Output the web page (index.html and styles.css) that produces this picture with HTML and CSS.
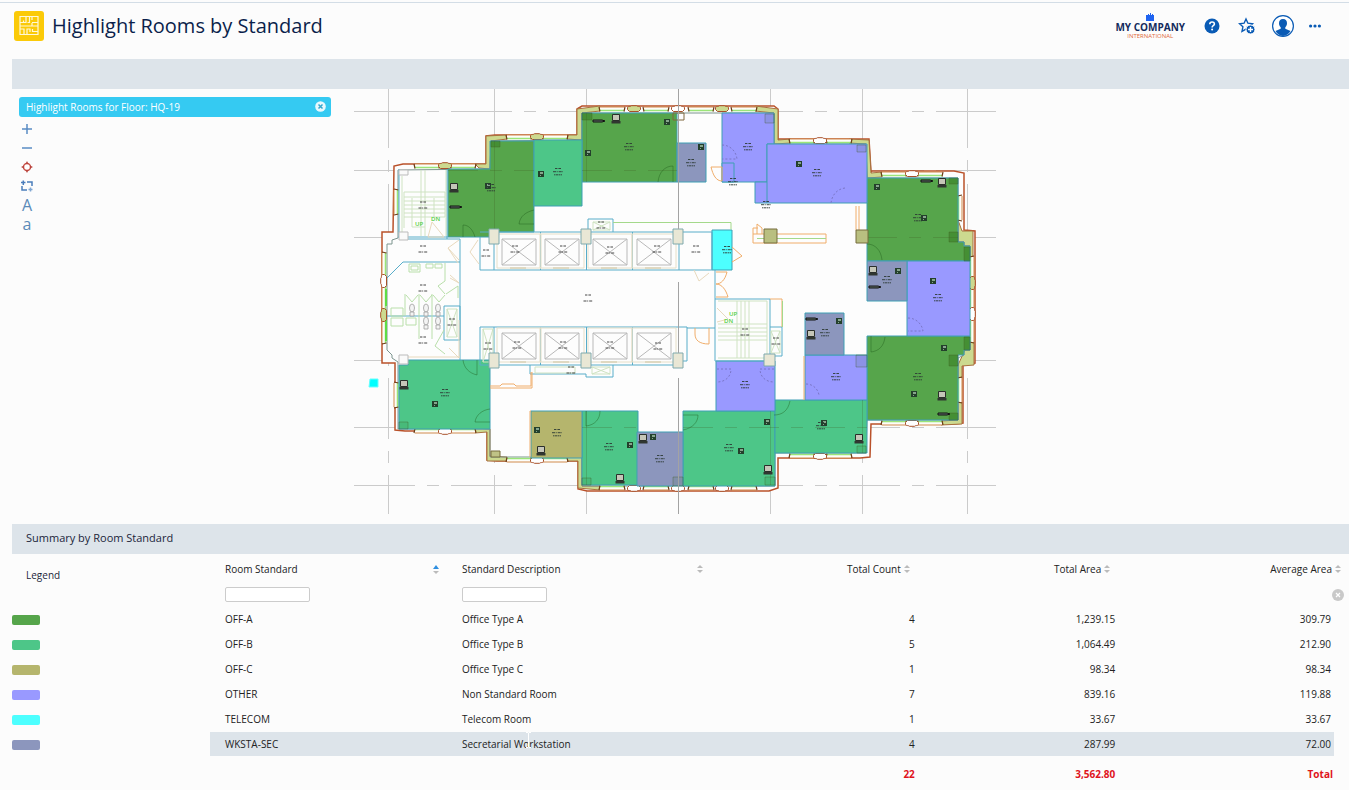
FILE: index.html
```html
<!DOCTYPE html>
<html lang="en">

	<head>
		<meta charset="UTF-8">
		<title>Highlight Rooms by Standard</title>
		<link rel="stylesheet" href="styles.css">
	</head>

	<body>
		<header class="top">
			<svg class="app-icon" viewBox="0 0 30 30">
				<rect width="30" height="30" rx="3" fill="#fbca08"/>
				<path d="M6 5.500h18v18H6zM6 11.500h3.500v-2M12 5.500v6h-2M15.500 5.500v6h-2M18 5.500v3.500M18 11.500h6M18 15h6M6 15h12v-3M6 18h4v5.500M13 23.500v-5.500h3v3M18.500 18v2.500h5.500" fill="none" stroke="#fff8d8" stroke-width="1.200"/>
			</svg>
			<h1>Highlight Rooms by Standard</h1>
			<div class="logo">
				<svg width="10" height="9" viewBox="0 0 10 9"><path d="M1 2h2V1h1v1h1V0h1v2h1V1h1v1h1v6H1z" fill="#1f63f0"/></svg>
				<b>MY COMPANY</b>
				<span>INTERNATIONAL</span>
			</div>
			<nav class="tools">
				<button type="button" class="help" aria-label="Help">
					<svg width="16" height="16" viewBox="0 0 16 16"><circle cx="8" cy="8" r="7.5" fill="#0a5bb5"/><path d="M5.8 6.2c0-3 4.6-2.9 4.6-.2 0 1.7-2.3 1.7-2.3 3.4" fill="none" stroke="#fff" stroke-width="1.6"/><circle cx="8.1" cy="11.6" r="1" fill="#fff"/></svg>
				</button>
				<button type="button" class="fav" aria-label="Add to favorites">
					<svg width="18" height="18" viewBox="0 0 18 18"><path d="M8 2l1.9 4.2 4.6.5-3.4 3.1.9 4.5L8 12.1l-4 2.2.9-4.5L1.5 6.7l4.6-.5z" fill="none" stroke="#0a5bb5" stroke-width="1.4"/><circle cx="12.5" cy="12.5" r="4.5" fill="#0a5bb5" stroke="#fcfcfc"/><path d="M12.5 10v5M10 12.5h5" stroke="#fff" stroke-width="1.4"/></svg>
				</button>
				<button type="button" class="user" aria-label="My profile">
					<svg width="22" height="22" viewBox="0 0 22 22"><circle cx="11" cy="11" r="10.4" fill="#fff" stroke="#0a5bb5" stroke-width="1.2"/><path d="M11 4c2.8 0 4 1.9 4 4.3 0 1.7-.7 3-1.7 4v1.4l5.2 2.3c-1.6 3-4.3 4.900-7.500 4.900S5.100 19 3.500 16l5.200-2.300v-1.400c-1-1-1.700-2.300-1.700-4C7 5.900 8.200 4 11 4z" fill="#0a5bb5"/></svg>
				</button>
				<button type="button" class="more" aria-label="More">
					<svg width="12" height="4" viewBox="0 0 12 4"><g fill="#0a5bb5"><circle cx="1.6" cy="2" r="1.6"/><circle cx="6" cy="2" r="1.6"/><circle cx="10.4" cy="2" r="1.6"/></g></svg>
				</button>
			</nav>
		</header>

		<main>
			<div class="bar"></div>

			<!-- floor drawing -->
			<section class="drawing">
				<div class="side">
					<div class="pill">
						<span>Highlight Rooms for Floor: HQ-19</span>
						<button type="button" aria-label="Close">
							<svg width="11" height="11" viewBox="0 0 11 11"><circle cx="5.5" cy="5.5" r="5.3" fill="#e8f8fd"/><path d="M3.5 3.5l4 4M7.5 3.5l-4 4" stroke="#35a6cc" stroke-width="1.5"/></svg>
						</button>
					</div>
					<div class="zoom">
						<button type="button" aria-label="Zoom in"><svg viewBox="0 0 12 12"><path d="M6 1v10M1 6h10" stroke="#5a8cc4" stroke-width="1.5"/></svg></button>
						<button type="button" aria-label="Zoom out"><svg viewBox="0 0 12 12"><path d="M1 6h10" stroke="#5a8cc4" stroke-width="1.5"/></svg></button>
						<button type="button" aria-label="Reset view"><svg viewBox="0 0 12 12"><circle cx="6" cy="6" r="3.5" fill="#fff" stroke="#c9534b" stroke-width="1.5"/><path d="M6 0l1.500 3h-3zM6 12l1.500-3h-3zM0 6l3-1.500v3zM12 6l-3-1.500v3z" fill="#b8433c"/></svg></button>
						<button type="button" aria-label="Zoom window"><svg viewBox="0 0 12 12"><path d="M0 2.500h4.500M2.300 .5v4.500M6 2h5v4M1 6v4h5" fill="none" stroke="#4a7dbb" stroke-width="1.5"/><path d="M7.500 9.500h4M9.500 7.500v4" stroke="#7fa6d2" stroke-width="1.5"/></svg></button>
						<button type="button" aria-label="Larger text">A</button>
						<button type="button" aria-label="Smaller text">a</button>
					</div>
				</div>

				<svg class="plan" viewBox="350 89 650 425" role="img" aria-label="Floor plan HQ-19">
					<defs>
						<g id="win"><path d="M0 0h24v4H0z" fill="#fdfdfa"/><path d="M0 3.500h24" stroke="#9be578" stroke-width="1.5"/><path d="M0 0h24" stroke="#d08a4c"/><path d="M-1 0l1 4.500M25 0l-1 4.500" stroke="#6d3d16" stroke-width="1.2"/></g>
						<path id="bulge" d="M-6.500 .5c0-1 2-1 3-1.200l1-.6h5l1 .6c1 .2 3 .2 3 1.200v2l-2 2h-9l-2-2z" stroke="#a8512a"/>
						<g id="phone"><path d="M-3-3h6v6h-6z" fill="#24402c"/><path d="M-1-2h3v2h-3zM-1 1h1v1h-1z" fill="#86a58c"/></g>
						<g id="pc"><path d="M-3.500-4.500h7v6h-7z" fill="#c5c6b8" stroke="#2b2f2b"/><path d="M-4.500 2h9v2.500h-9z" fill="#303630"/></g>
						<path id="bar" d="M-6-1H3l3 1-3 1h-9z" fill="#607068" stroke="#111"/>
						<g id="tag" fill="none" stroke="#2c3a34" stroke-width=".9"><path d="M-3-3.500h6" stroke-dasharray="2 .6 1 .4"/><path d="M-5-.3H5" stroke-dasharray="3 .7 1 1"/><path d="M-4 2.800h8" stroke-dasharray="1 .5 3 .5"/></g>
						<g id="tag2" fill="none" stroke="#333" stroke-width=".9"><path d="M-3-3h6" stroke-dasharray="2 .6 1 .4"/><path d="M-4.500 3h9" stroke-dasharray="3 .7 1 1"/></g>
						<g id="lift"><path d="M0 0h34v26H0zM0 0l34 26M34 0L0 26" fill="none" stroke="#b9b9b9"/><path d="M-5-5H39V29H-5z" fill="none" stroke="#e6dfc8"/><path d="M8 29h16" stroke="#cfc4a0"/></g>
						<path id="col" d="M0 0h10v15H0z" fill="#e9e7d5" stroke="#7fa9ad"/>
						<g id="wc" fill="#f4f4f4" stroke="#a0a0a0" stroke-width=".8"><ellipse cy="2" rx="2.500" ry="4"/><path d="M-2 6h4v4h-4z"/></g>
					</defs>

					<!-- grid -->
					<g stroke="#cbcbcb" stroke-dasharray="61 12 12 12">
						<path d="M354 111.500h642M354 170.500h642M354 237.500h642M354 360.500h642M354 427.500h642M354 485.500h642"/>
						<path d="M388.500 87v427M494.500 87v427M586.500 87v427M770.500 87v427M862.500 87v427M967.500 87v427"/>
					</g>

					<!-- walls -->
					<path class="outer" d="M382 255v-23h11l1-66 9-2h83v-28l9-1h82v-26l5-3h192l4 3v31l1-1h90l2 33 1-1h82l10 2v57l11 1v132l-12 2v58l-9 1h-83l-1 33-10 1h-82v30l-9 3H587l-9-2v-27l-1-1h-80l-10-1v-28l-1-1h-81l-10-1v-67h-13z"/>
					<g class="khaki">
						<path d="M475 164h11v-28l21-1v4l-16 2-1 28-11-1z"/>
						<path d="M567 135h10v-26l23-3v5l-18 2v27l-15-1z"/>
						<path d="M755 106l23 3v31l13-1v4l-17 1v-31l-19-2z"/>
						<path d="M849 139l20 1 2 33 11-1v5l-15 1-1-34-17-1z"/>
						<path d="M958 220l4 11h11v26h-3v-11h-6v-4h-6z"/>
						<path d="M970 341h4v24l-12 1v12h-4v-13l7-15h5z"/>
						<path d="M962 402v22l-21 1v-4l17-1v-18z"/>
						<path d="M475 428l15 1v27l17 1v4h-20v-29l-12 1z"/>
						<path d="M567 457h15v29h18v4l-22-2v-27h-11z"/>
					</g>
					<path class="inner" d="M398 170l92-1 1-28 91-1v-27h192v31h92l1 34h91v64h6v4h6v104h-6v5l-6 3v62h-91l-1 33h-91v33H582v-29h-92v-28h-92v-67l-6-4v-3l-5-5V244h5v-4l6-2z"/>

					<g>
						<use href="#win" x="415" y="164"/><use href="#win" x="451" y="164"/><use href="#win" x="507" y="135"/><use href="#win" x="543" y="135"/>
						<use href="#win" x="600" y="107"/><use href="#win" x="644" y="107"/><use href="#win" x="689" y="107"/><use href="#win" x="732" y="107"/>
						<use href="#win" x="790" y="139"/><use href="#win" x="827" y="139"/><use href="#win" x="882" y="172"/><use href="#win" x="918" y="172"/>
						<g transform="scale(1 -1)">
							<use href="#win" x="415" y="-433"/><use href="#win" x="451" y="-433"/><use href="#win" x="507" y="-462"/><use href="#win" x="543" y="-462"/>
							<use href="#win" x="600" y="-490"/><use href="#win" x="644" y="-490"/><use href="#win" x="689" y="-490"/><use href="#win" x="732" y="-490"/>
							<use href="#win" x="790" y="-458"/><use href="#win" x="827" y="-458"/><use href="#win" x="882" y="-425"/><use href="#win" x="918" y="-425"/>
						</g>
						<use href="#win" transform="translate(394 214) rotate(-90)"/><use href="#win" transform="translate(394 407) rotate(-90)"/>
						<use href="#win" transform="translate(382 277) rotate(-90)"/><use href="#win" transform="translate(382 310) rotate(-90)"/><use href="#win" transform="translate(382 343) rotate(-90)"/>
						<use href="#win" transform="translate(962 196) rotate(90)"/><use href="#win" transform="translate(962 378) rotate(90)"/>
						<use href="#win" transform="translate(974 257) rotate(90)"/><use href="#win" transform="translate(974 287) rotate(90)"/><use href="#win" transform="translate(974 318) rotate(90)"/>
					</g>
					<path d="M386 289v17M386 319v22" stroke="#5fdc45" stroke-width="2"/>
					<g fill="#ccd98f">
						<use href="#bulge" x="445" y="164"/><use href="#bulge" x="537" y="135"/><use href="#bulge" x="634" y="107"/><use href="#bulge" x="722" y="107"/>
						<use href="#bulge" transform="translate(382 315) rotate(-90)"/><use href="#bulge" transform="translate(974 283) rotate(90)"/>
					</g>
					<g fill="#fff">
						<use href="#bulge" x="678" y="107"/><use href="#bulge" x="820" y="139"/><use href="#bulge" x="912" y="172"/>
						<use href="#bulge" transform="translate(382 281) rotate(-90)"/><use href="#bulge" transform="translate(974 314) rotate(90)"/>
						<g transform="scale(1 -1)">
							<use href="#bulge" x="445" y="-433"/><use href="#bulge" x="537" y="-462"/><use href="#bulge" x="634" y="-490"/><use href="#bulge" x="678" y="-490"/>
							<use href="#bulge" x="722" y="-490"/><use href="#bulge" x="820" y="-458"/><use href="#bulge" x="912" y="-425"/>
						</g>
					</g>

					<!-- rooms -->
					<g class="room">
						<g class="off-a">
							<path d="M448 169h42v-28h44v91h-40v5h-46z"/>
							<path d="M582 113h95v69h-95z"/>
							<path d="M867 178h91v64h6v4h6v15H867z"/>
							<path d="M867 336h103v14h-6v5h-6v65h-91z"/>
						</g>
						<g class="off-b">
							<path d="M534 140h48v66h-48z"/>
							<path d="M408 360h82v69h-91v-64h9z"/>
							<path d="M582 411h56v74h-56z"/>
							<path d="M683 411h92v75h-92z"/>
							<path d="M775 400h92v53h-92z"/>
						</g>
						<path class="off-c" d="M531 411h51v47h-51z"/>
						<g class="other">
							<path d="M722 113h52v31h-7v38h-45z"/>
							<path d="M722 163h12v19h-12z"/>
							<path d="M767 144h100v59H755v-21h12z"/>
							<path d="M767 182v21"/>
							<path d="M907 261h63v75h-63z"/>
							<path d="M805 355h62v45h-62z"/>
							<path d="M716 361h59v50h-59z"/>
						</g>
						<path class="telecom" d="M712 230h20v40h-20z"/>
						<g class="wksta">
							<path d="M677 143h29v39h-29z"/>
							<path d="M867 261h40v40h-40z"/>
							<path d="M805 313h39v42h-39z"/>
							<path d="M637 432h46v54h-46z"/>
						</g>
					</g>
					<!-- columns and grid showing through the room colours -->
					<g fill="#1d5c00" fill-opacity=".3" stroke="#3f5a20" stroke-opacity=".35">
						<path d="M491 141h9v6h-9zM582 113h10v7h-10zM949 178h9v6h-9zM949 232h9v10h-9zM949 355h9v11h-9zM949 413h9v7h-9zM964 247h6v14h-6zM964 337h6v13h-6z"/>
						<path d="M857 145h9v7h-9zM856 355h11v12h-11zM765 114h9v9h-9zM673 477h10v9h-10zM582 478h9v7h-9zM765 477h10v8h-10zM857 446h9v7h-9zM399 422h9v7h-9z" fill-opacity=".1"/>
					</g>
					<g stroke="#3f5a20" stroke-opacity=".25">
						<path d="M582 170.500h95M448 170.500h86M867 237.500h91M582 427.500h55M683 427.500h184" stroke-dasharray="30 12 12 12"/>
						<path d="M494.500 141v91M586.500 113v69M586.500 411v74M770.500 411v74M862.500 400v53"/>
					</g>

					<!-- core -->
					<g class="core">
						<path d="M448 237h-50M407 239h53v121M387 278l16-16h57M387 316h57M444 306h16v34h-16z"/>
						<path d="M480 237v33h232v-38H480M494 232v38M540.500 232v38M586.500 232v38M632.500 232v38M679 232v38"/>
						<path d="M480 365v-38h207v34h-5v4H480M494 327v38M540.500 327v38M586.500 327v38M632.500 327v38"/>
						<path d="M687 328h28M715 270v91M715 299h55v62h-55M770 327h12v29h-12M530 365v9h56v3h27v-12M588 232v-13h25v13M399 169v69M447 169v70"/>
					</g>
					<use href="#lift" x="502" y="239"/><use href="#lift" x="545" y="239"/><use href="#lift" x="593" y="239"/><use href="#lift" x="637" y="239"/>
					<use href="#lift" x="502" y="333"/><use href="#lift" x="545" y="333"/><use href="#lift" x="593" y="333"/><use href="#lift" x="637" y="333"/>
					<g fill="none" stroke="#cfe3c2">
						<path d="M593 222h17v8h-17zM593 222l17 8M610 222l-17 8M535 367h40v6h-40zM592 367h18v7h-18zM592 367l18 7M610 367l-18 7M483 329h10v33h-10zM483 329l10 33M493 329l-10 33M447 309h10v28h-10zM447 309l10 28M457 309l-10 28M771 331h9v22h-9zM771 331l9 22M780 331l-9 22"/>
						<path d="M402 176v60M421 170v66M425 170v66M446 170v66M404 192h41M404 197h41M404 201h41M404 205h41M404 209h41M404 213h41M404 217h41M404 192v36M412 198v29h13M434 198v19M445 192v25"/>
						<path d="M718 301h49v57h-49M737 301v57M741 301v57M745 301v57M749 301v57M718 324h49M718 328h49M718 332h49M718 336h49M718 340h49"/>
						<path d="M409 264h11v8h-11zM411 266h7v4h-7zM426 264h7v4h-7zM435 264h7v4h-7zM391 308h12v8h-12zM391 318h12v8h-12zM406 318h10v7h-10zM405 294v22M419 294v45M432 294v45M406 295l6 7 6-7M420 295l6 7 6-7M433 295l6 7 6-7M445 263v18l-7 5 7 8M444 330l-9 16 10 8M446 294l12-8v12" stroke="#b9dfaa"/>
					</g>
					<use href="#wc" x="412" y="306"/><use href="#wc" x="426" y="306"/><use href="#wc" x="438" y="306"/><use href="#wc" x="426" y="319"/><use href="#wc" x="438" y="319"/>
					<g fill="none" stroke="#e8d9bd">
						<path d="M432 222l-4 15h16zM448 248l10 15M459 240l-11 8 11 12M478 240l-8 12 9 12M450 275l9 8-9-5M459 320v38M403 357h57M694 270l5 11 10-8M717 308l11 11-11 3M449 348l10 10"/>
					</g>
					<g fill="none" stroke="#f0ad6a">
						<path d="M716 272h11M727 272c-2 8-6 12-11 12 6 0 10 6 12 13h-12M732 247l10 9-10 6M695 328v6c0 6 4 10 14 10v-16M770 299h12v28M758 228h-5v15h73v-9h-73M757 234v-10l5 4v6M711 167h11v14c-6 0-9-6-11-14M856 206v24M859 206v24M490 386h10l2-2h12l2 2h15v-14M490 388h42v-16M804 356v44M531 411h-1v46"/>
					</g>
					<g fill="none" stroke="#1f5a18" stroke-opacity=".4">
						<path d="M463 225v12M463 225c6 0 10 5 12 12M534 210c-8 2-14 6-15 14h15M673 166v16M673 166c-8 0-14 6-15 16M867 244c8 0 14 6 15 16M871 352v-16M871 352c8-1 13-6 14-15M463 360c1 8 6 13 14 15v-15M490 409c-8 1-14 6-15 13h15M600 411c0 8-5 14-14 15v-15M683 415h15c0 7-5 13-15 15M774 415c8 0 14-4 16-14"/>
					</g>
					<g fill="none" stroke="#7a76c8" stroke-dasharray="2 2">
						<path d="M722 145c8 0 14 6 15 14h-15M845 188c-8 1-13 7-14 15M908 318c8 0 14 6 15 13h-15M717 369h14c0 8-6 13-14 13M774 369h-14c0 8 6 13 14 13M806 384c7 0 12 5 13 11"/>
					</g>
					<path d="M613 222.500h118v7M757 238.500h69M782.500 301v26" fill="none" stroke="#a4d98b"/>
					<use href="#col" x="489" y="229"/><use href="#col" x="581" y="229"/><use href="#col" x="673" y="229"/>
					<use href="#col" x="489" y="353"/><use href="#col" x="581" y="353"/><use href="#col" x="673" y="353"/>
					<path d="M764 354h11v12h-11z" fill="#e9e7d5" stroke="#7fa9ad"/>
					<path d="M764 229h13v14h-13zM856 230h12v13h-12z" fill="#b9bf80" stroke="#776d3c"/>
					<path d="M399 170h9v5h-9zM399 232h9v8h-9zM399 355h9v9h-9z" fill="#fafafa" stroke="#bbb"/>
					<path d="M673 113h11v7h-11z" fill="none" stroke="#80693f"/>
					<path d="M678.500 89v140M678.500 282v71M678.500 378v136" fill="none" stroke="#a3a3a3"/>
					<path d="M491 451h9v6h-9z" fill="#bfc286" stroke="#776d3c"/>

					<!-- equipment -->
					<use href="#phone" x="541" y="174"/><use href="#phone" x="488" y="186"/><use href="#phone" x="588" y="153"/><use href="#phone" x="667" y="122"/>
					<use href="#phone" x="701" y="147"/><use href="#phone" x="799" y="164"/><use href="#phone" x="877" y="187"/><use href="#phone" x="924" y="218"/>
					<use href="#phone" x="898" y="271"/><use href="#phone" x="933" y="281"/><use href="#phone" x="839" y="321"/><use href="#phone" x="944" y="348"/>
					<use href="#phone" x="914" y="394"/><use href="#phone" x="824" y="423"/><use href="#phone" x="767" y="422"/><use href="#phone" x="741" y="451"/>
					<use href="#phone" x="630" y="445"/><use href="#phone" x="653" y="437"/><use href="#phone" x="537" y="430"/><use href="#phone" x="435" y="404"/>
					<use href="#pc" x="454" y="188"/><use href="#pc" x="616" y="119"/><use href="#pc" x="942" y="183"/><use href="#pc" x="873" y="271"/>
					<use href="#pc" x="811" y="335"/><use href="#pc" x="942" y="396"/><use href="#pc" x="859" y="439"/><use href="#pc" x="768" y="470"/>
					<use href="#pc" x="620" y="479"/><use href="#pc" x="643" y="439"/><use href="#pc" x="541" y="451"/><use href="#pc" x="404" y="385"/>
					<use href="#bar" x="456" y="207"/><use href="#bar" x="599" y="121"/><use href="#bar" x="927" y="181"/><use href="#bar" x="875" y="287"/><use href="#bar" x="812" y="319"/><use href="#bar" x="944" y="414"/>

					<!-- room tags -->
					<use href="#tag" x="629" y="147"/><use href="#tag" x="558" y="172"/><use href="#tag" x="491" y="188"/><use href="#tag" x="691" y="163"/>
					<use href="#tag" x="748" y="147"/><use href="#tag" x="817" y="173"/><use href="#tag" x="918" y="218"/><use href="#tag" x="887" y="280"/>
					<use href="#tag" x="938" y="298"/><use href="#tag" x="825" y="333"/><use href="#tag" x="918" y="377"/><use href="#tag" x="836" y="377"/>
					<use href="#tag" x="745" y="385"/><use href="#tag" x="821" y="426"/><use href="#tag" x="729" y="448"/><use href="#tag" x="660" y="459"/>
					<use href="#tag" x="609" y="447"/><use href="#tag" x="557" y="433"/><use href="#tag" x="445" y="393"/><use href="#tag" x="727" y="250"/>
					<use href="#tag" x="766" y="205"/><use href="#tag" x="733" y="182"/>
					<use href="#tag2" x="588" y="298"/><use href="#tag2" x="423" y="205"/><use href="#tag2" x="423" y="249"/><use href="#tag2" x="423" y="288"/><use href="#tag2" x="423" y="340"/>
					<use href="#tag2" x="515" y="249"/><use href="#tag2" x="563" y="249"/><use href="#tag2" x="610" y="250"/><use href="#tag2" x="657" y="249"/><use href="#tag2" x="696" y="249"/><use href="#tag2" x="486" y="253"/>
					<use href="#tag2" x="517" y="345"/><use href="#tag2" x="563" y="345"/><use href="#tag2" x="610" y="345"/><use href="#tag2" x="658" y="346"/><use href="#tag2" x="488" y="346"/>
					<use href="#tag2" x="745" y="332"/><use href="#tag2" x="776" y="341"/><use href="#tag2" x="452" y="322"/><use href="#tag2" x="601" y="225"/><use href="#tag2" x="571" y="370"/>

					<g class="stairs">
						<text x="415" y="226">UP</text><text x="431" y="221">DN</text>
						<text x="729" y="316">UP</text><text x="724" y="323">DN</text>
					</g>
					<path d="M370 379h8v8h-9z" fill="#0ff" stroke="#6ff"/>
				</svg>
			</section>

			<!-- summary -->
			<section class="summary">
				<h2 class="bar">Summary by Room Standard</h2>
				<div class="report">
					<div class="legend">
						<h3>Legend</h3>
						<ul>
							<li class="off-a"></li>
							<li class="off-b"></li>
							<li class="off-c"></li>
							<li class="other"></li>
							<li class="telecom"></li>
							<li class="wksta"></li>
						</ul>
					</div>
					<table>
						<colgroup>
							<col class="c-std"><col class="c-desc"><col class="c-count"><col class="c-total"><col class="c-avg"><col class="c-end">
						</colgroup>
						<thead>
							<tr>
								<th><div>Room Standard <i class="sort up"></i></div></th>
								<th><div>Standard Description <i class="sort"></i></div></th>
								<th class="num"><div>Total Count <i class="sort"></i></div></th>
								<th class="num"><div>Total Area <i class="sort"></i></div></th>
								<th class="num last" colspan="2"><div>Average Area <i class="sort"></i></div></th>
							</tr>
							<tr class="filter">
								<td><input type="text" aria-label="Filter by Room Standard"></td>
								<td><input type="text" aria-label="Filter by Standard Description"></td>
								<td></td>
								<td></td>
								<td class="clear" colspan="2">
									<button type="button" aria-label="Clear filter"><svg width="12" height="12" viewBox="0 0 12 12"><circle cx="6" cy="6" r="6" fill="#c9c9c9"/><path d="M4 4l4 4M8 4l-4 4" stroke="#fff" stroke-width="1.2"/></svg></button>
								</td>
							</tr>
						</thead>
						<tbody>
							<tr><td>OFF-A</td><td>Office Type A</td><td>4</td><td>1,239.15</td><td>309.79</td></tr>
							<tr><td>OFF-B</td><td>Office Type B</td><td>5</td><td>1,064.49</td><td>212.90</td></tr>
							<tr><td>OFF-C</td><td>Office Type C</td><td>1</td><td>98.34</td><td>98.34</td></tr>
							<tr><td>OTHER</td><td>Non Standard Room</td><td>7</td><td>839.16</td><td>119.88</td></tr>
							<tr><td>TELECOM</td><td>Telecom Room</td><td>1</td><td>33.67</td><td>33.67</td></tr>
							<tr class="hover"><td>WKSTA-SEC</td><td>Secretarial Workstation<svg class="cursor" width="7" height="16" viewBox="0 0 7 16"><path d="M1 .5h2l.5 1 .5-1h2M3.500 1v14M1 15.500h2l.5-1 .5 1h2" fill="none" stroke="#fff"/></svg></td><td>4</td><td>287.99</td><td>72.00</td></tr>
						</tbody>
						<tfoot>
							<tr><td></td><td></td><td>22</td><td>3,562.80</td><td>Total</td></tr>
						</tfoot>
					</table>
				</div>
			</section>
		</main>
	</body>

</html>
```
FILE: styles.css
```css
* {
	margin: 0;
	padding: 0;
	box-sizing: border-box;
}

body {
	background: #fcfcfc;
	color: #1b1f3a;
	font: 10px/18px "Open Sans", sans-serif;
}

button {
	border: 0;
	background: none;
	font: inherit;
	cursor: pointer;
}

svg {
	display: block;
}

/* header */
.top {
	display: flex;
	align-items: center;
	height: 57px;
	margin-top: 2px;
	padding: 0 28px 10px 14px;
	border-top: 1px solid #d3dde6;
}

.app-icon {
	width: 30px;
	height: 30px;
}

h1 {
	margin-left: 8px;
	font-size: 20px;
	line-height: 30px;
	font-weight: 400;
	color: #0b1f4b;
}

.logo {
	display: flex;
	flex-direction: column;
	align-items: center;
	margin-left: auto;
}

.logo b {
	font-size: 10px;
	line-height: 10px;
	color: #142b5c;
}

.logo span {
	font-size: 6px;
	line-height: 8px;
	color: #e06a3b;
}

.tools {
	display: flex;
	align-items: center;
	margin-left: 19px;
}

.fav {
	margin-left: 18px;
}

.user {
	margin-left: 16px;
}

.more {
	margin-left: 15px;
}

main {
	margin-left: 12px;
}

.bar {
	height: 30px;
	background: #dde4ea;
}

/* drawing */
.drawing {
	display: flex;
	gap: 19px;
	height: 435px;
	padding-left: 7px;
}

.side {
	width: 312px;
	padding-top: 8px;
}

.pill {
	display: flex;
	justify-content: space-between;
	height: 20px;
	padding: 0 5px 0 7px;
	border-radius: 3px;
	background: #35caf2;
	color: #fff;
	line-height: 20px;
	font-weight: 500;
}

.pill button {
	height: 18px;
}

.zoom {
	display: flex;
	flex-direction: column;
	width: 16px;
	padding-top: 2px;
}

.zoom button {
	display: flex;
	align-items: center;
	justify-content: center;
	height: 19px;
	color: #5b8bb8;
	font-size: 16px;
	line-height: 16px;
}

.zoom svg {
	width: 12px;
	height: 12px;
}

.plan {
	flex: none;
	width: 650px;
	height: 425px;
}

.outer {
	fill: #fdfdfd;
	stroke: #b9512a;
	stroke-width: 1.5;
}

.inner {
	fill: none;
	stroke: #7d958f;
}

.khaki {
	fill: #ccd98f;
	stroke: #a8713f;
	stroke-width: 1;
}

.room {
	stroke: #3f9fb4;
	stroke-width: 1;
}

.core {
	fill: none;
	stroke: #58adc9;
	stroke-width: 1;
}

.stairs text {
	font-size: 6px;
	font-weight: 600;
	fill: #4fce3c;
}

.off-a { fill: #56a54b; background: #56a54b; }
.off-b { fill: #4dc688; background: #4dc688; }
.off-c { fill: #b5b56d; background: #b5b56d; }
.other { fill: #9999ff; background: #9999ff; }
.telecom { fill: #4dffff; background: #4dffff; }
.wksta { fill: #8c96bd; background: #8c96bd; }

/* summary */
h2.bar {
	padding-left: 14px;
	font-size: 11px;
	line-height: 28px;
	font-weight: 500;
}

.report {
	display: flex;
}

.legend {
	width: 198px;
}

h3 {
	height: 53px;
	padding: 12px 0 0 14px;
	font-size: 10px;
	font-weight: 500;
}

.legend ul {
	list-style: none;
}

.legend li {
	width: 28px;
	height: 10px;
	margin: 8px 0 15px;
	border-radius: 2px;
}

table {
	flex: 1;
	table-layout: fixed;
	border-collapse: separate;
	border-spacing: 0;
}

.c-std { width: 20.8%; }
.c-desc { width: 22.7%; }
.c-count { width: 19.7%; }
.c-total { width: 17.6%; }
.c-end { width: 15px; }

th, td {
	padding: 0 15px;
	text-align: left;
	color: #222;
}

th {
	height: 30px;
	font-weight: 500;
}

th div {
	display: flex;
	align-items: center;
	justify-content: space-between;
}

th:first-child {
	padding-right: 8px;
}

th:nth-child(2) {
	padding-right: 2px;
}

.num {
	padding-right: 20px;
}

.num div {
	justify-content: flex-end;
	gap: 3px;
}

.num.last {
	padding-right: 8px;
}

.sort {
	width: 6px;
}

.sort::before,
.sort::after {
	content: "";
	display: block;
	border: 3px solid transparent;
	border-top: 0;
	border-bottom: 3px solid #bbb;
}

.sort::after {
	margin-top: 2px;
	border-top: 3px solid #bbb;
	border-bottom: 0;
}

.sort.up::before {
	border-bottom: 4px solid #2f8fe0;
}

.filter td {
	height: 23px;
	padding-bottom: 2px;
}

.filter input {
	display: block;
	width: 85px;
	height: 15px;
	border: 1px solid #ccc;
	border-radius: 2px;
	background: #fff;
}

.filter .clear {
	padding-right: 5px;
}

.clear button {
	display: block;
	margin-left: auto;
}

tbody td {
	position: relative;
	height: 25px;
	border-bottom: 1px solid #fcfcfc;
}

tbody td:nth-child(n+3),
tfoot td {
	text-align: right;
}

tbody td:nth-child(5) {
	padding-right: 3px;
}

.hover td {
	background: #dde4ea;
}

.cursor {
	position: absolute;
	left: 78px;
	top: 0;
}

tfoot td {
	padding-top: 8px;
	font-weight: 700;
	color: #e0141c;
}

tfoot td:last-child {
	padding-right: 1px;
}
```
